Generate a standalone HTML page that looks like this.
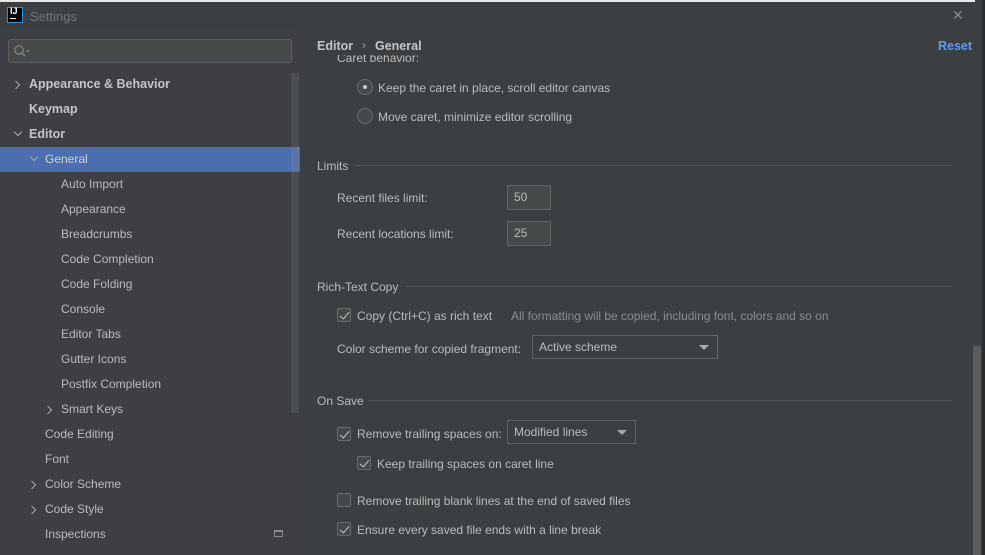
<!DOCTYPE html>
<html><head><meta charset="utf-8"><style>
*{margin:0;padding:0;box-sizing:border-box}
body{width:985px;height:555px;overflow:hidden;background:#3c3f41;font-family:"Liberation Sans",sans-serif;font-size:12px;color:#bbbbbb;position:relative}
.abs{position:absolute;white-space:nowrap}
#side{position:absolute;left:0;top:29px;width:300px;height:526px;background:#3d3f45}
.row{position:absolute;left:0;width:300px;height:25px;line-height:25px}
.chev{position:absolute;width:6px;height:6px;border-right:1.5px solid #a9a9a9;border-bottom:1.5px solid #a9a9a9}
.r{transform:rotate(-45deg)}
.d{transform:rotate(45deg)}
.hdr{position:absolute;left:317px;height:16px;line-height:16px}
.line{position:absolute;height:1px;background:#525456;right:33px}
.cb{position:absolute;width:14px;height:14px;border:1px solid #6b6b6b;border-radius:2px;background:#43494a}
.cb.c::after{content:"";position:absolute;left:4px;top:1px;width:4px;height:8px;border-right:1.5px solid #c8c8c8;border-bottom:1.5px solid #c8c8c8;transform:rotate(40deg)}
.in{position:absolute;border:1px solid #646464;background:#45494a;height:25px;line-height:23px;padding-left:6px}
.dd{position:absolute;border:1px solid #646464;background:#3c3f41;height:24px;line-height:22px;padding-left:6px}
.dd::after{content:"";position:absolute;right:8px;top:9px;border-left:5px solid transparent;border-right:5px solid transparent;border-top:5px solid #aaa}
.b{font-weight:bold;font-size:12.5px;color:#c5c5c5}
</style></head><body>
<div class="abs" style="left:0;top:0;width:975px;height:2px;background:#e8e8e8"></div>
<div class="abs" style="left:7px;top:7px;width:16px;height:16px;background:#000;border:1px solid #2f8de0"></div>
<div class="abs" style="left:10px;top:6px;color:#fff;font-size:9px;font-weight:bold">IJ</div>
<div class="abs" style="left:10px;top:18px;width:6px;height:1px;background:#fff"></div>
<div class="abs" style="left:30px;top:9px;color:#717477;font-size:13px">Settings</div>
<div class="abs" style="left:952px;top:7px;color:#8a8a8a;font-size:14px">✕</div>

<div id="side"></div>
<div class="abs" style="left:8px;top:39px;width:284px;height:24px;border:1px solid #5e6060;border-radius:3px;background:#45494a"></div>
<svg class="abs" style="left:13px;top:44px" width="20" height="14"><circle cx="6" cy="6" r="4.2" fill="none" stroke="#888" stroke-width="1.2"/><line x1="9" y1="9" x2="12" y2="12" stroke="#888" stroke-width="1.3"/><path d="M13 6 L17 6 L15 8Z" fill="#888"/></svg>
<div class="abs" style="left:291px;top:73px;width:8px;height:340px;background:#4a4d53"></div>
<div class="row" style="top:147px;width:300px;background:#4b6eaf"></div>
<div class="abs" style="left:291px;top:147px;width:8px;height:24px;background:#5a75a8"></div>

<div class="chev r" style="left:13px;top:82px"></div>
<div class="abs b" style="left:29px;top:77px">Appearance &amp; Behavior</div>
<div class="abs b" style="left:29px;top:102px">Keymap</div>
<div class="chev d" style="left:15px;top:129px"></div>
<div class="abs b" style="left:29px;top:127px">Editor</div>
<div class="chev d" style="left:31px;top:154px"></div>
<div class="abs" style="left:45px;top:152px;color:#d0d4dc">General</div>
<div class="abs" style="left:61px;top:177px">Auto Import</div>
<div class="abs" style="left:61px;top:202px">Appearance</div>
<div class="abs" style="left:61px;top:227px">Breadcrumbs</div>
<div class="abs" style="left:61px;top:252px">Code Completion</div>
<div class="abs" style="left:61px;top:277px">Code Folding</div>
<div class="abs" style="left:61px;top:302px">Console</div>
<div class="abs" style="left:61px;top:327px">Editor Tabs</div>
<div class="abs" style="left:61px;top:352px">Gutter Icons</div>
<div class="abs" style="left:61px;top:377px">Postfix Completion</div>
<div class="chev r" style="left:45px;top:407px"></div>
<div class="abs" style="left:61px;top:402px">Smart Keys</div>
<div class="abs" style="left:45px;top:427px">Code Editing</div>
<div class="abs" style="left:45px;top:452px">Font</div>
<div class="chev r" style="left:29px;top:482px"></div>
<div class="abs" style="left:45px;top:477px">Color Scheme</div>
<div class="chev r" style="left:29px;top:507px"></div>
<div class="abs" style="left:45px;top:502px">Code Style</div>
<div class="abs" style="left:45px;top:527px">Inspections</div>
<div class="abs" style="left:274px;top:530px;width:9px;height:7px;border:1px solid #8a8a8a;border-top-width:2px"></div>

<div class="abs b" style="left:317px;top:39px">Editor</div>
<div class="abs" style="left:362px;top:38px;color:#999;font-size:12px">›</div>
<div class="abs b" style="left:375px;top:39px">General</div>
<div class="abs b" style="left:938px;top:39px;color:#589df6">Reset</div>

<div class="abs" style="left:337px;top:55px;height:10px;overflow:hidden"><div style="margin-top:-4px">Caret behavior:</div></div>
<div class="abs" style="left:357px;top:79px;width:16px;height:16px;border-radius:50%;border:1px solid #6b6b6b;background:#43494a"></div>
<div class="abs" style="left:363px;top:85px;width:4px;height:4px;border-radius:50%;background:#ccc"></div>
<div class="abs" style="left:378px;top:81px">Keep the caret in place, scroll editor canvas</div>
<div class="abs" style="left:357px;top:108px;width:16px;height:16px;border-radius:50%;border:1px solid #6b6b6b;background:#43494a"></div>
<div class="abs" style="left:378px;top:110px">Move caret, minimize editor scrolling</div>

<div class="hdr" style="top:158px">Limits</div><div class="line" style="left:355px;top:165px"></div>
<div class="abs" style="left:337px;top:191px">Recent files limit:</div>
<div class="in" style="left:507px;top:185px;width:44px">50</div>
<div class="abs" style="left:337px;top:227px">Recent locations limit:</div>
<div class="in" style="left:507px;top:221px;width:44px">25</div>

<div class="hdr" style="top:279px">Rich-Text Copy</div><div class="line" style="left:406px;top:286px"></div>
<div class="cb c" style="left:337px;top:308px"></div>
<div class="abs" style="left:357px;top:309px">Copy (Ctrl+C) as rich text</div>
<div class="abs" style="left:511px;top:309px;color:#8c8c8c">All formatting will be copied, including font, colors and so on</div>
<div class="abs" style="left:337px;top:342px">Color scheme for copied fragment:</div>
<div class="dd" style="left:532px;top:335px;width:186px">Active scheme</div>

<div class="hdr" style="top:393px">On Save</div><div class="line" style="left:368px;top:400px"></div>
<div class="cb c" style="left:337px;top:427px"></div>
<div class="abs" style="left:357px;top:427px">Remove trailing spaces on:</div>
<div class="dd" style="left:507px;top:420px;width:129px">Modified lines</div>
<div class="cb c" style="left:357px;top:456px"></div>
<div class="abs" style="left:377px;top:457px">Keep trailing spaces on caret line</div>
<div class="cb" style="left:337px;top:493px"></div>
<div class="abs" style="left:357px;top:494px">Remove trailing blank lines at the end of saved files</div>
<div class="cb c" style="left:337px;top:522px"></div>
<div class="abs" style="left:357px;top:523px">Ensure every saved file ends with a line break</div>

<div class="abs" style="left:973px;top:346px;width:8px;height:209px;background:#5a5c5e"></div>
<div class="abs" style="left:982px;top:0;width:3px;height:555px;background:#2b2b2b"></div>
</body></html>
